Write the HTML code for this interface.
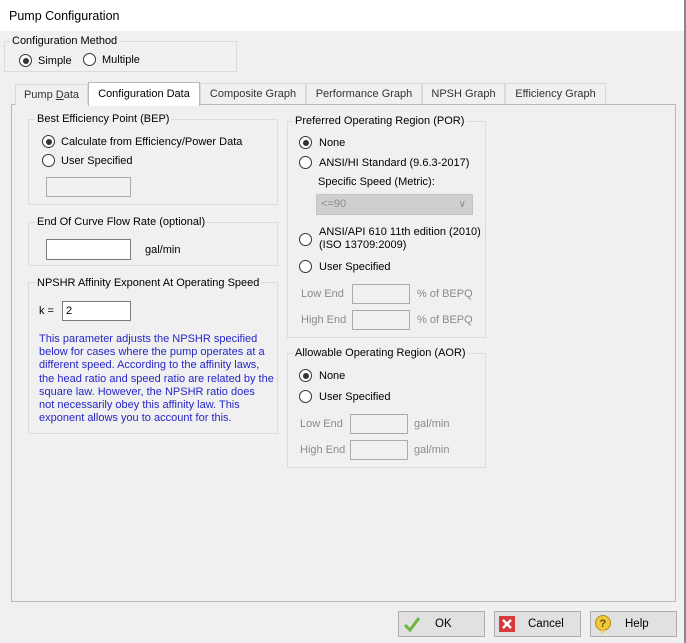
<!DOCTYPE html>
<html><head><style>
*{box-sizing:border-box;margin:0;padding:0}
body{width:686px;height:643px;background:#f0f0f0;font-family:"Liberation Sans",sans-serif;font-size:11px;color:#000;position:relative;overflow:hidden}
.a{position:absolute;white-space:nowrap;line-height:14px}
.g{position:absolute;border:1px solid #dcdcdc}
.lg{position:absolute;background:#f0f0f0;padding:0 2px;line-height:14px;white-space:nowrap}
.r{position:absolute;width:13px;height:13px;border:1px solid #333;border-radius:50%;background:#fff}
.r.on::after{content:"";position:absolute;left:2.5px;top:2.5px;width:6px;height:6px;border-radius:50%;background:#333}
.tb{position:absolute;background:#fff;border:1px solid #7a7a7a}
.tb.d{background:#f0f0f0;border-color:#ccc}
.gr{color:#8a8a8a}
.tab{position:absolute;top:83px;height:21px;border:1px solid #d9d9d9;border-bottom:none;background:#f0f0f0;text-align:center;line-height:20px;color:#333}
.btn{position:absolute;top:611px;width:87px;height:26px;border:1px solid #adadad;background:#e1e1e1;line-height:24px;font-size:11.5px}
</style></head><body>
<div style="position:absolute;left:0;top:0;width:686px;height:31px;background:#fff"></div>
<div class="a" style="left:9px;top:9px;font-size:12.5px">Pump Configuration</div>
<div style="position:absolute;left:684px;top:0;width:2px;height:643px;background:#888"></div>

<div class="g" style="left:4px;top:41px;width:233px;height:31px"></div>
<div class="lg" style="left:10px;top:34px">Configuration Method</div>
<div class="r on" style="left:19px;top:54px"></div><div class="a" style="left:38px;top:54px">Simple</div>
<div class="r" style="left:83px;top:53px"></div><div class="a" style="left:102px;top:53px">Multiple</div>

<div style="position:absolute;left:11px;top:104px;width:665px;height:498px;border:1px solid #b9b9b9"></div>
<div class="tab" style="left:15px;width:73px;top:84px">Pump <u>D</u>ata</div>
<div class="tab" style="left:200px;width:106px">Composite Graph</div>
<div class="tab" style="left:306px;width:116px">Performance Graph</div>
<div class="tab" style="left:422px;width:83px">NPSH Graph</div>
<div class="tab" style="left:505px;width:101px">Efficiency Graph</div>
<div class="tab" style="left:88px;width:112px;top:82px;height:24px;background:#fff;border-color:#b9b9b9;color:#000;line-height:22px">Configuration Data</div>

<div class="g" style="left:28px;top:119px;width:250px;height:86px"></div>
<div class="lg" style="left:35px;top:112px">Best Efficiency Point (BEP)</div>
<div class="r on" style="left:42px;top:135px"></div><div class="a" style="left:61px;top:135px">Calculate from Efficiency/Power Data</div>
<div class="r" style="left:42px;top:154px"></div><div class="a" style="left:61px;top:154px">User Specified</div>
<div class="tb d" style="left:46px;top:177px;width:85px;height:20px;border-color:#aaa"></div>

<div class="g" style="left:28px;top:222px;width:250px;height:44px"></div>
<div class="lg" style="left:35px;top:215px">End Of Curve Flow Rate (optional)</div>
<div class="tb" style="left:46px;top:239px;width:85px;height:21px"></div>
<div class="a" style="left:145px;top:243px">gal/min</div>

<div class="g" style="left:28px;top:282px;width:250px;height:152px"></div>
<div class="lg" style="left:35px;top:276px">NPSHR Affinity Exponent At Operating Speed</div>
<div class="a" style="left:39px;top:304px">k =</div>
<div class="tb" style="left:62px;top:301px;width:69px;height:20px;padding-left:3px;line-height:18px">2</div>
<div class="a" style="left:39px;top:333px;color:#2626c8;line-height:13.2px">This parameter adjusts the NPSHR specified<br>below for cases where the pump operates at a<br>different speed. According to the affinity laws,<br>the head ratio and speed ratio are related by the<br>square law. However, the NPSHR ratio does<br>not necessarily obey this affinity law. This<br>exponent allows you to account for this.</div>

<div class="g" style="left:287px;top:121px;width:199px;height:217px"></div>
<div class="lg" style="left:293px;top:114px">Preferred Operating Region (POR)</div>
<div class="r on" style="left:299px;top:136px"></div><div class="a" style="left:319px;top:136px">None</div>
<div class="r" style="left:299px;top:156px"></div><div class="a" style="left:319px;top:156px">ANSI/HI Standard (9.6.3-2017)</div>
<div class="a" style="left:318px;top:175px">Specific Speed (Metric):</div>
<div style="position:absolute;left:316px;top:194px;width:157px;height:21px;background:#cfcfcf;border:1px solid #c4c4c4;color:#8a8a8a;line-height:19px;padding-left:4px">&lt;=90<span style="position:absolute;right:6px;top:0;font-size:10px">&#8744;</span></div>
<div class="r" style="left:299px;top:233px"></div><div class="a" style="left:319px;top:226px;line-height:13px">ANSI/API 610 11th edition (2010)<br>(ISO 13709:2009)</div>
<div class="r" style="left:299px;top:260px"></div><div class="a" style="left:319px;top:260px">User Specified</div>
<div class="a gr" style="left:301px;top:287px">Low End</div>
<div class="tb d" style="left:352px;top:284px;width:58px;height:20px;border-color:#aaa"></div>
<div class="a gr" style="left:417px;top:287px">% of BEPQ</div>
<div class="a gr" style="left:301px;top:313px">High End</div>
<div class="tb d" style="left:352px;top:310px;width:58px;height:20px;border-color:#aaa"></div>
<div class="a gr" style="left:417px;top:313px">% of BEPQ</div>

<div class="g" style="left:287px;top:353px;width:199px;height:115px"></div>
<div class="lg" style="left:293px;top:346px">Allowable Operating Region (AOR)</div>
<div class="r on" style="left:299px;top:369px"></div><div class="a" style="left:319px;top:369px">None</div>
<div class="r" style="left:299px;top:390px"></div><div class="a" style="left:319px;top:390px">User Specified</div>
<div class="a gr" style="left:300px;top:417px">Low End</div>
<div class="tb d" style="left:350px;top:414px;width:58px;height:20px;border-color:#aaa"></div>
<div class="a gr" style="left:414px;top:417px">gal/min</div>
<div class="a gr" style="left:300px;top:443px">High End</div>
<div class="tb d" style="left:350px;top:440px;width:58px;height:20px;border-color:#aaa"></div>
<div class="a gr" style="left:414px;top:443px">gal/min</div>

<div class="btn" style="left:398px"><svg style="position:absolute;left:4px;top:4px" width="18" height="16"><path d="M2 9 L7 14 L16 2" stroke="#6cb33f" stroke-width="3" fill="none"/></svg><span style="position:absolute;left:36px">OK</span></div>
<div class="btn" style="left:494px"><svg style="position:absolute;left:4px;top:4px" width="16" height="16"><rect width="16" height="16" fill="#d63a3a"/><path d="M4 4L12 12M12 4L4 12" stroke="#fff" stroke-width="2.4"/></svg><span style="position:absolute;left:33px">Cancel</span></div>
<div class="btn" style="left:590px"><svg style="position:absolute;left:3px;top:3px" width="18" height="19"><circle cx="9" cy="8" r="7.5" fill="#f0c838" stroke="#b08a20"/><path d="M7 15 L8 19 L11 15Z" fill="#f0c838"/><text x="5.5" y="12" font-size="11" font-weight="bold" fill="#6a4a10" font-family="Liberation Sans">?</text></svg><span style="position:absolute;left:34px">Help</span></div>
</body></html>
